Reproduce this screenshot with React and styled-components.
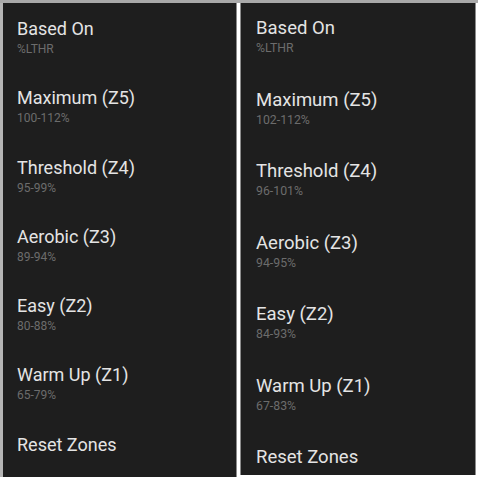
import React from 'react'
import styled, { createGlobalStyle } from 'styled-components'

const GlobalStyle = createGlobalStyle`
  html, body {
    margin: 0;
    padding: 0;
    background: #ffffff;
  }
  body {
    font-family: Roboto, "Noto Sans", sans-serif;
    -webkit-font-smoothing: antialiased;
  }
`

const Frame = styled.div({
    width: "478px",
    height: "479px",
    boxSizing: "border-box",
    borderTop: "3px solid #a9a9a9",
    display: "flex",
    alignItems: "flex-start",
    gap: "3px",
    background: "#ffffff",
    overflow: "hidden"
})

const Panel = styled.div(props => ({
    width: props.$width,
    height: props.$height,
    boxSizing: "border-box",
    background: "#1e1e1e",
    borderLeft: props.$edgeLeft ? "3px solid #b5b5b5" : "1px solid #8c8c8c",
    borderRight: "1px solid #8c8c8c",
    display: "flex",
    flexDirection: "column",
    overflow: "hidden"
}))

const List = styled.div(props => ({
    flex: 1,
    paddingTop: props.$top,
    paddingLeft: props.$left,
    display: "grid",
    gridAutoRows: props.$pitch,
    alignContent: "start"
}))

const Row = styled.div({
    display: "flex",
    flexDirection: "column"
})

const Title = styled.div(props => ({
    fontSize: props.$size,
    lineHeight: "22px",
    color: "#e4e4e4",
    whiteSpace: "nowrap"
}))

const Sub = styled.div(props => ({
    marginTop: "1px",
    fontSize: props.$size,
    lineHeight: "16px",
    color: "#6c6c6c",
    whiteSpace: "nowrap"
}))

const BottomStrip = styled.div({
    height: "9px",
    background: "#141414"
})

const left = [
    ["Based On", "%LTHR"],
    ["Maximum (Z5)", "100-112%"],
    ["Threshold (Z4)", "95-99%"],
    ["Aerobic (Z3)", "89-94%"],
    ["Easy (Z2)", "80-88%"],
    ["Warm Up (Z1)", "65-79%"],
    ["Reset Zones"]
]

const right = [
    ["Based On", "%LTHR"],
    ["Maximum (Z5)", "102-112%"],
    ["Threshold (Z4)", "96-101%"],
    ["Aerobic (Z3)", "94-95%"],
    ["Easy (Z2)", "84-93%"],
    ["Warm Up (Z1)", "67-83%"],
    ["Reset Zones"]
]

const ZoneList = ({ items, pitch, top, padLeft, titleSize, subSize }) => (
    <List $pitch={pitch} $top={top} $left={padLeft}>
        {items.map(([title, sub]) => (
            <Row key={title}>
                <Title $size={titleSize}>{title}</Title>
                {sub && <Sub $size={subSize}>{sub}</Sub>}
            </Row>
        ))}
    </List>
)

export default function App() {
    return (
        <>
            <GlobalStyle />
            <Frame>
                <Panel $width="237px" $height="474px" $edgeLeft>
                    <ZoneList items={left} pitch="69.3px" top="15px" padLeft="14px" titleSize="18px" subSize="12px" />
                    <BottomStrip />
                </Panel>
                <Panel $width="236px" $height="472px">
                    <ZoneList items={right} pitch="71.5px" top="14px" padLeft="15px" titleSize="18.5px" subSize="12.3px" />
                </Panel>
            </Frame>
        </>
    )
}
